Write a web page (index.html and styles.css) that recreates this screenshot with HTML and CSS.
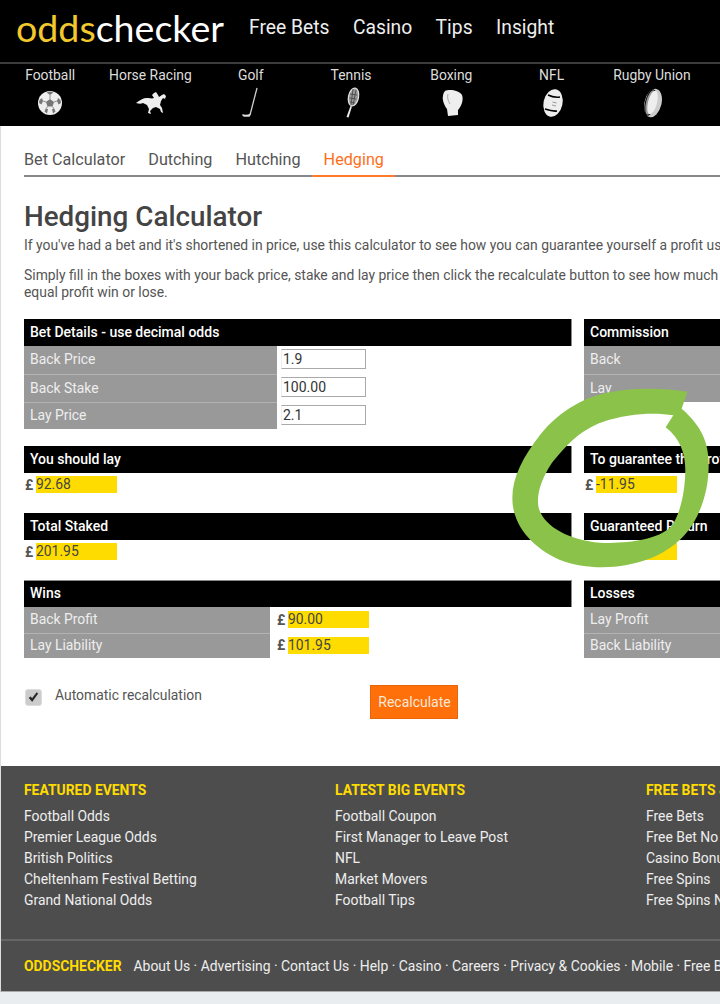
FILE: index.html
```html
<!DOCTYPE html>
<html lang="en">

<head>
    <meta charset="UTF-8">
    <meta name="viewport" content="width=device-width, initial-scale=1.0">
    <title>Hedging Calculator</title>
    <link rel="stylesheet" href="styles.css">
</head>

<body>

    <header class="topbar">
        <div class="logo"><span class="logo-odds">odds</span>checker</div>
        <nav class="topnav">
            <a>Free Bets</a>
            <a>Casino</a>
            <a>Tips</a>
            <a>Insight</a>
        </nav>
    </header>

    <nav class="sports">
        <div class="sport">
            <span>Football</span>
            <svg viewBox="0 0 32 32">
                <circle cx="16" cy="16" r="12" fill="#eee" />
                <path d="M16 12l4 3-1.500 4.500h-5L12 15z" fill="#777" />
                <path d="M16 4.500l3.500 1-3.500 2.500-3.500-2.500zM5.500 13l2.500-2 1 3-1.500 3.500-2.500-1.500zM26.500 13l-2.500-2-1 3 1.500 3.500 2.500-1.500zM10.500 24.500l1-2.500h2.500l-1 4.500zM21.500 24.500l-1-2.500h-2.500l1 4.500z" fill="#777" />
                <path d="M16 8v4M9 14l3 1M23 14l-3 1M13.500 19.500L12 22M18.500 19.500L20 22" stroke="#777" stroke-width=".8" />
            </svg>
        </div>
        <div class="sport">
            <span>Horse Racing</span>
            <svg viewBox="0 0 32 32">
                <path d="M2 16C6 13 9 11 13 11C16 11 18 12 20 11L18 8L20 6L22 5L24 8L25 10L28 8L30 7L32 9L31 12L29 11L27 14L26 18L28 21L29 26L27 25L26 22L22 20L19 21L16 24L17 27L14 26L15 22L13 18L9 16C7 17 5 17 2 16Z" fill="#eee" />
            </svg>
        </div>
        <div class="sport">
            <span>Golf</span>
            <svg viewBox="0 0 32 32">
                <path d="M22 1L15 28" stroke="#ccc" stroke-width="1.300" fill="none" />
                <path d="M7.500 27c2 1 5 1 8-.5l-.5 3c-3 .5-6 .5-7.500-.5z" fill="#ddd" />
            </svg>
        </div>
        <div class="sport">
            <span>Tennis</span>
            <svg viewBox="0 0 32 32">
                <ellipse cx="18.500" cy="10" rx="5" ry="9" transform="rotate(12 18.500 10)" fill="#999" stroke="#ddd" stroke-width="1.300" />
                <path d="M15 7l7 1M14.500 11l7 1M15 15l5 1M18 2l-2 16M21 3l-3 15" stroke="#444" stroke-width=".8" />
                <path d="M15.500 19l1.500.5-3.500 11-2-.5z" fill="#eee" />
            </svg>
        </div>
        <div class="sport">
            <span>Boxing</span>
            <svg viewBox="0 0 32 32">
                <path d="M10 4c4-2 14-1 17 4 2 5-1 12-4 15v5l-10 1-1-7c-3-4-5-10-4-13 0-2 1-4 2-5z" fill="#eee" />
                <path d="M13 7c-1 3 0 7 2 10" stroke="#aaa" stroke-width="1" fill="none" />
            </svg>
        </div>
        <div class="sport">
            <span>NFL</span>
            <svg viewBox="0 0 32 32">
                <ellipse cx="17" cy="16" rx="9.500" ry="14" transform="rotate(12 17 16)" fill="#eee" />
                <path d="M12 8c3 1.500 8 2.500 12 2M9 22c3 1 8 2.500 12 2" stroke="#000" stroke-width="1.600" fill="none" />
                <path d="M16.500 15l4 1M16 18l4 1" stroke="#999" stroke-width="1" fill="none" />
            </svg>
        </div>
        <div class="sport">
            <span>Rugby Union</span>
            <svg viewBox="0 0 32 32">
                <ellipse cx="17" cy="16" rx="8.500" ry="14.500" transform="rotate(14 17 16)" fill="#ccc" />
                <ellipse cx="14.500" cy="15.500" rx="5" ry="13" transform="rotate(14 14.500 15.500)" fill="#999" stroke="#000" stroke-width="1" />
                <ellipse cx="16.500" cy="15.500" rx="4.500" ry="12" transform="rotate(14 16.500 15.500)" fill="#eee" />
            </svg>
        </div>
    </nav>

    <main class="content">
        <div class="tabs">
            <a class="tab">Bet Calculator</a>
            <a class="tab">Dutching</a>
            <a class="tab">Hutching</a>
            <a class="tab active">Hedging</a>
        </div>

        <h1>Hedging Calculator</h1>
        <p class="intro">If you've had a bet and it's shortened in price, use this calculator to see how you can guarantee yourself a profit using hedging.</p>
        <p class="intro second">Simply fill in the boxes with your back price, stake and lay price then click the recalculate button to see how much to lay for an<br>equal profit win or lose.</p>

        <div class="calc">
            <section class="block">
                <div class="block-title">Bet Details - use decimal odds</div>
                <div class="row tall"><div class="label">Back Price</div><input class="field" type="text" value="1.9"></div>
                <div class="row tall"><div class="label">Back Stake</div><input class="field" type="text" value="100.00"></div>
                <div class="row tall"><div class="label">Lay Price</div><input class="field" type="text" value="2.1"></div>
            </section>
            <section class="block">
                <div class="block-title">Commission</div>
                <div class="row tall"><div class="label">Back</div><input class="field" type="text" value="0"></div>
                <div class="row tall"><div class="label">Lay</div><input class="field" type="text" value="0"></div>
            </section>

            <section class="block">
                <div class="block-title">You should lay</div>
                <div class="result"><span class="pound">£</span><span class="amount">92.68</span></div>
            </section>
            <section class="block">
                <div class="block-title">To guarantee the profit</div>
                <div class="result"><span class="pound">£</span><span class="amount">-11.95</span></div>
            </section>

            <section class="block">
                <div class="block-title">Total Staked</div>
                <div class="result"><span class="pound">£</span><span class="amount">201.95</span></div>
            </section>
            <section class="block">
                <div class="block-title">Guaranteed Return</div>
                <div class="result"><span class="pound">£</span><span class="amount">190.00</span></div>
            </section>

            <section class="block">
                <div class="block-title edged">Wins</div>
                <div class="row short"><div class="label narrow">Back Profit</div><div class="result inline"><span class="pound">£</span><span class="amount">90.00</span></div></div>
                <div class="row short"><div class="label narrow">Lay Liability</div><div class="result inline"><span class="pound">£</span><span class="amount">101.95</span></div></div>
            </section>
            <section class="block">
                <div class="block-title edged">Losses</div>
                <div class="row short"><div class="label narrow">Lay Profit</div><div class="result inline"><span class="pound">£</span><span class="amount">-11.95</span></div></div>
                <div class="row short"><div class="label narrow">Back Liability</div><div class="result inline"><span class="pound">£</span><span class="amount">100.00</span></div></div>
            </section>
        </div>

        <div class="actions">
            <span class="checkbox">
                <svg viewBox="0 0 17 17"><path d="M3.500 9l3.500 4 6.500-9-1.500-1-5 6.500-2-1.800z" fill="#222" stroke="#222" stroke-width=".6" /></svg>
            </span>
            <label class="auto">Automatic recalculation</label>
            <button class="recalc" type="button">Recalculate</button>
        </div>
    </main>

    <footer class="footer">
        <div class="footer-cols">
            <div class="footer-col">
                <h4>FEATURED EVENTS</h4>
                <a>Football Odds</a>
                <a>Premier League Odds</a>
                <a>British Politics</a>
                <a>Cheltenham Festival Betting</a>
                <a>Grand National Odds</a>
            </div>
            <div class="footer-col">
                <h4>LATEST BIG EVENTS</h4>
                <a>Football Coupon</a>
                <a>First Manager to Leave Post</a>
                <a>NFL</a>
                <a>Market Movers</a>
                <a>Football Tips</a>
            </div>
            <div class="footer-col">
                <h4>FREE BETS &amp; OFFERS</h4>
                <a>Free Bets</a>
                <a>Free Bet No Deposit</a>
                <a>Casino Bonus</a>
                <a>Free Spins</a>
                <a>Free Spins No Deposit</a>
            </div>
        </div>
        <div class="footer-bottom">
            <b>ODDSCHECKER</b>
            <span>About Us · Advertising · Contact Us · Help · Casino · Careers · Privacy &amp; Cookies · Mobile · Free Bets</span>
        </div>
    </footer>

    <!-- hand drawn ring over the screenshot -->
    <svg class="ring" viewBox="0 0 720 1080">
        <path fill="#8bc34a" fill-rule="evenodd" d="M622 245C560 235 480 232 410 243C320 255 240 300 180 375C130 440 97 500 97 565C97 640 150 710 240 750C300 772 370 778 440 765C530 750 600 705 640 640C675 580 690 510 685 440C682 400 668 350 605 296ZM580 316C520 306 440 312 370 335C300 358 250 415 215 460C185 505 165 560 178 600C195 650 270 692 360 698C440 702 530 690 572 652C600 615 615 550 616 480C616 430 600 385 557 352Z" />
    </svg>

</body>

</html>
```

FILE: styles.css
```css
html,
body {
    margin: 0;
    overflow: hidden;
}

body {
    position: relative;
    width: 720px;
    height: 1004px;
    background-color: #e9edf0;
    font-family: 'Roboto', sans-serif;
    font-size: 13.9px;
    color: #555;
    white-space: nowrap;
}

/* top bar */
.topbar {
    display: flex;
    align-items: center;
    height: 55px;
    padding: 0 0 7px 16px;
    background-color: #000;
}

.logo {
    font-family: 'Lato', sans-serif;
    font-size: 37.6px;
    color: #fff;
    width: 209px;
    margin-bottom: 1px;
}

.logo-odds {
    color: #f2c82e;
}

.topnav {
    display: flex;
    gap: 23.4px;
    margin-left: 24px;
    font-size: 19.3px;
    color: #eee;
}

.sports {
    display: flex;
    height: 59px;
    padding-top: 3px;
    border-top: 2px solid #3c3c3c;
    background-color: #000;
}

.sport {
    display: flex;
    flex-direction: column;
    align-items: center;
    width: 100.3px;
    color: #ddd;
    line-height: 16px;
}

.sport svg {
    width: 32px;
    height: 32px;
    margin-top: 4px;
}

/* main */
.content {
    background-color: #fff;
    border-left: 1px solid #ddd;
    padding-left: 23px;
    padding-bottom: 47px;
}

.tabs {
    display: flex;
    padding-top: 24px;
    border-bottom: 2px solid #888;
}

.tab {
    padding: 0 11.5px 6px;
    margin-bottom: -2px;
    border-bottom: 2px solid transparent;
    font-size: 16.2px;
    line-height: 19px;
    color: #555;
}

.tab:first-child {
    padding-left: 0;
}

.tab.active {
    color: #ff6f1a;
    border-bottom-color: #ff7a2a;
}

h1 {
    margin: 24px 0 0 0;
    font-size: 27.8px;
    font-weight: 500;
    line-height: 32px;
    color: #444;
}

.intro {
    margin: 4px 0 0 0;
    line-height: 17px;
}

.intro.second {
    margin-top: 13px;
}

.calc {
    display: grid;
    grid-template-columns: 548px 548px;
    column-gap: 12px;
    row-gap: 17px;
    margin-top: 18px;
}

.block-title {
    height: 27px;
    line-height: 26px;
    padding-left: 6px;
    box-sizing: border-box;
    background-color: #000;
    border-right: 1px solid #888;
    font-size: 14px;
    font-weight: 500;
    color: #fff;
}

.block-title.edged {
    border-top: 1px solid #888;
    line-height: 24px;
}

.row {
    display: flex;
    align-items: center;
}

.row.tall {
    height: 28px;
}

.row.tall:nth-child(4) {
    height: 27px;
}

.row.short {
    height: 25.5px;
}

.label {
    display: flex;
    align-items: center;
    align-self: stretch;
    width: 253px;
    padding: 0 0 2px 6px;
    box-sizing: border-box;
    background-color: #999;
    border-top: 1px solid #b3b3b3;
    color: #eee;
}

.row:nth-child(2) .label {
    border-top: none;
}

.label.narrow {
    width: 246px;
    padding-bottom: 1px;
}

.field {
    width: 85px;
    height: 20px;
    margin: 0 0 2px 4px;
    padding: 0 0 0 1px;
    box-sizing: border-box;
    border: 1px solid #aaa;
    border-left-color: #eee;
    border-radius: 0;
    outline: none;
    font-family: 'Roboto', sans-serif;
    font-size: 14px;
    color: #333;
}

.result {
    display: flex;
    align-items: center;
    padding: 3px 0 3px 1px;
    height: 17px;
}

.result.inline {
    padding: 0 0 0 7px;
}

.pound {
    width: 11px;
    font-weight: 700;
    color: #555;
}

.amount {
    width: 81px;
    height: 17px;
    line-height: 16px;
    background-color: #ffdc00;
    color: #444;
}

.actions {
    display: flex;
    align-items: flex-start;
    margin-top: 27px;
}

.checkbox {
    display: block;
    width: 17px;
    height: 17px;
    margin: 4px 0 0 1px;
    border-radius: 3px;
    background-color: #ccc;
    border: 1px solid #ddd;
    box-sizing: border-box;
}

.checkbox svg {
    display: block;
    width: 15px;
    height: 15px;
}

.auto {
    width: 315px;
    margin: 2px 0 0 13px;
    line-height: 17px;
}

.recalc {
    width: 88px;
    height: 34px;
    padding: 0 0 0 1px;
    border: 1px solid #e8650a;
    background-color: #ff6f0a;
    font-family: 'Roboto', sans-serif;
    font-size: 14px;
    color: #f8e8d8;
}

/* footer */
.footer {
    background-color: #4d4d4d;
    border-left: 1px solid #ddd;
    border-bottom: 1px solid #aaa;
    color: #eee;
    height: 225px;
}

.footer-cols {
    display: grid;
    grid-template-columns: 311px 311px 311px;
    padding: 16px 0 28px 23px;
    border-bottom: 2px solid #666;
}

.footer-col h4 {
    margin: 0 0 7px 0;
    font-size: 13.9px;
    font-weight: 700;
    line-height: 17px;
    color: #ffdc00;
}

.footer-col a {
    display: block;
    line-height: 21px;
}

.footer-bottom {
    display: flex;
    gap: 12px;
    padding: 17px 0 0 23px;
    line-height: 17px;
}

.footer-bottom b {
    color: #ffdc00;
}

/* drawn on top of the page */
.ring {
    position: absolute;
    left: 480px;
    top: 310px;
    width: 240px;
    height: 360px;
}
```
